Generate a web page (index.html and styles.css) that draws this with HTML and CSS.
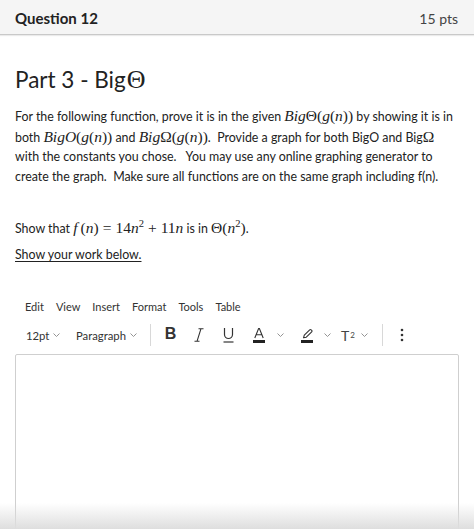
FILE: index.html
```html
<!DOCTYPE html>
<html>
<head>
<meta charset="utf-8">
<link rel="stylesheet" href="styles.css">
</head>
<body>
<div class="header">
  <span class="qtitle">Question 12</span>
  <span class="pts">15 pts</span>
</div>
<div class="content">
  <h1 class="part">Part 3 - Big<span class="theta">Θ</span></h1>
  <p class="desc">For the following function, prove it is in the given <span class="m"><i>Big</i>Θ(<i>g</i>(<i>n</i>))</span> by showing it is in both <span class="m"><i>BigO</i>(<i>g</i>(<i>n</i>))</span> and <span class="m"><i>Big</i>Ω(<i>g</i>(<i>n</i>))</span>.&nbsp; Provide a graph for both BigO and Big<span class="m">Ω</span> with the constants you chose.&nbsp;&nbsp; You may use any online graphing generator to create the graph.&nbsp; Make sure all functions are on the same graph including f(n).</p>
  <p class="show">Show that <span class="m"><i>f</i>&thinsp;(<i>n</i>)<span class="op">=</span>14<i>n</i><sup>2</sup><span class="op">+</span>11<i>n</i></span> is in <span class="m">Θ(<i>n</i><sup>2</sup>)</span>.</p>
  <p class="work">Show your work below.</p>
</div>
<div class="editor">
  <div class="menubar">
    <span>Edit</span><span>View</span><span>Insert</span><span>Format</span><span>Tools</span><span>Table</span>
  </div>
  <div class="toolbar">
    <span class="txt pt">12pt</span>
    <svg class="chev c1" viewBox="0 0 7 4"><path d="M0.5 0.5l3 3 3-3" fill="none" stroke="#888" stroke-width="0.9"/></svg>
    <span class="txt para">Paragraph</span>
    <svg class="chev c2" viewBox="0 0 7 4"><path d="M0.5 0.5l3 3 3-3" fill="none" stroke="#888" stroke-width="0.9"/></svg>
    <span class="sep s1"></span>
    <span class="slot bold">B</span>
    <span class="slot ital"><svg viewBox="0 0 10 14" width="10" height="14"><path d="M4.5 0.7h5M0.5 13.3h5M7 0.7L3 13.3" fill="none" stroke="#333" stroke-width="1.1"/></svg></span>
    <span class="slot under"><svg viewBox="0 0 11 15" width="11" height="15"><path d="M1.5 0v6.5a4 4 0 0 0 8 0V0" fill="none" stroke="#333" stroke-width="1.2"/><path d="M0.5 14h10" stroke="#333" stroke-width="1.2"/></svg></span>
    <span class="slot color"><svg viewBox="0 0 12 15" width="12" height="15"><path d="M1.8 10L5.6 0.6h0.8L10.2 10M3.2 6.8h5.6" fill="none" stroke="#333" stroke-width="1.1"/><rect x="0" y="12" width="12" height="3" fill="#222"/></svg></span>
    <svg class="chev c3" viewBox="0 0 7 4"><path d="M0.5 0.5l3 3 3-3" fill="none" stroke="#888" stroke-width="0.9"/></svg>
    <span class="slot hl"><svg viewBox="0 0 12 15" width="12" height="15"><path d="M2.5 9.8l0.8-2.6 5.4-5.4a1 1 0 0 1 1.4 0l0.6 0.6a1 1 0 0 1 0 1.4L5.3 9.2z M3 9.2l1 0.6" fill="none" stroke="#333" stroke-width="1.1" stroke-linejoin="round"/><rect x="0" y="12" width="12" height="3" fill="#222"/></svg></span>
    <svg class="chev c4" viewBox="0 0 7 4"><path d="M0.5 0.5l3 3 3-3" fill="none" stroke="#888" stroke-width="0.9"/></svg>
    <span class="slot sup">T<sup>2</sup></span>
    <svg class="chev c5" viewBox="0 0 7 4"><path d="M0.5 0.5l3 3 3-3" fill="none" stroke="#888" stroke-width="0.9"/></svg>
    <span class="sep s2"></span>
    <span class="slot more"><svg viewBox="0 0 4 14" width="4" height="14"><circle cx="2" cy="2" r="1.3" fill="#333"/><circle cx="2" cy="7" r="1.3" fill="#333"/><circle cx="2" cy="12" r="1.3" fill="#333"/></svg></span>
  </div>
  <div class="area"></div>
</div>
<div class="fade"></div>
</body>
</html>
```
FILE: styles.css
```css
html, body {
  margin: 0;
  padding: 0;
  background: #fff;
  font-family: Lato, "Liberation Sans", sans-serif;
  color: #222;
  overflow: hidden;
}
body {
  width: 474px;
  height: 529px;
  position: relative;
}
.header {
  height: 34px;
  background: #f5f5f5;
  border-bottom: 1px solid #c9c9c9;
  box-shadow: 0 1px 1px rgba(0,0,0,0.08);
  display: flex;
  align-items: center;
  justify-content: space-between;
  padding: 0 16px 0 15px;
}
.qtitle {
  font-weight: 700;
  font-size: 15px;
  color: #222;
  position: relative;
  top: 1px;
}
.pts {
  font-size: 14px;
  color: #444;
  position: relative;
  top: 1px;
}
.content {
  padding: 0 15px;
  color: #222;
}
.part {
  font-weight: 400;
  font-size: 22.5px;
  margin: 29px 0 0 0;
  line-height: 32px;
  color: #222;
}
.theta {
  font-family: "Liberation Serif", serif;
  font-size: 26px;
  margin-left: 1px;
}
.desc {
  font-size: 12.4px;
  line-height: 19.5px;
  margin: 10px 0 0 0;
}
.m {
  font-family: "Liberation Serif", serif;
  font-size: 15.5px;
}
.m i {
  font-style: italic;
}
.m sup {
  font-size: 10.5px;
  line-height: 0;
  vertical-align: 6px;
}
.op {
  margin: 0 4px;
}
.show {
  font-size: 12.4px;
  line-height: 20px;
  margin: 32px 0 0 0;
}
.work {
  font-size: 12.4px;
  line-height: 20px;
  margin: 6px 0 0 0;
  text-decoration: underline;
  text-underline-offset: 2px;
}
.editor {
  padding: 0 15px;
  margin-top: 31px;
}
.menubar {
  display: flex;
  gap: 12px;
  padding-left: 10px;
  font-size: 11px;
  color: #333;
  height: 20px;
  align-items: center;
}
.toolbar {
  display: flex;
  align-items: center;
  height: 24px;
  margin-top: 7px;
  padding-left: 11px;
  font-size: 11.3px;
  color: #333;
}
.txt {
  display: inline-block;
}
.pt { width: 24px; }
.para { width: 50px; margin-left: 16px; }
.chev {
  width: 7px;
  height: 4px;
  flex: none;
}
.c1 { margin-left: 3px; }
.c2 { margin-left: 4px; }
.c3 { margin-left: 8px; }
.c4 { margin-left: 6.5px; }
.c5 { margin-left: 3px; }
.sep {
  width: 1px;
  height: 22px;
  background: #d8d8d8;
  flex: none;
}
.s1 { margin-left: 13px; }
.s2 { margin-left: 14px; }
.slot {
  display: inline-flex;
  align-items: center;
  justify-content: center;
  width: 21px;
  height: 24px;
  flex: none;
}
.bold {
  font-family: "Liberation Sans", sans-serif;
  font-weight: 700;
  font-size: 16px;
  color: #333;
  margin-left: 9px;
  position: relative;
  top: -1px;
}
.ital { margin-left: 7px; width: 22px; }
.under { margin-left: 8px; }
.color { margin-left: 9px; }
.hl { margin-left: 12px; }
.sup {
  font-size: 14px;
  color: #444;
  margin-left: 7.5px;
  width: 20px;
}
.sup sup {
  font-size: 8px;
  line-height: 0;
  vertical-align: 6px;
  margin-left: 1px;
}
.more { margin-left: 14px; width: 10px; }
.area {
  margin-top: 7px;
  height: 300px;
  border: 1px solid #cfcfcf;
  border-radius: 2px;
}
.fade {
  position: absolute;
  left: 0;
  right: 0;
  bottom: 0;
  height: 26px;
  background: linear-gradient(to bottom, rgba(235,235,235,0), rgba(222,222,222,1));
}
```
